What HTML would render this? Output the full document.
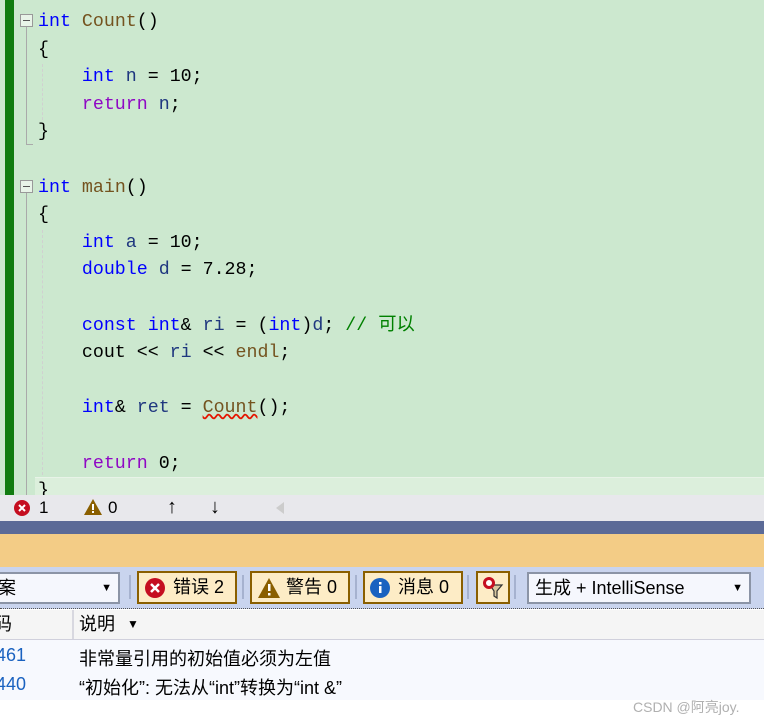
<!DOCTYPE html><html><head><meta charset="utf-8"><style>
body{margin:0;width:764px;height:724px;position:relative;overflow:hidden;background:#fff;font-family:"Liberation Sans","Noto Sans CJK SC",sans-serif}
.ed{position:absolute;left:0;top:0;width:764px;height:495px;background:#cce8cf}
.gb{position:absolute;left:5px;top:0;width:9px;height:495px;background:#107c10}
.code{position:absolute;left:38px;top:9px;font-family:"Liberation Mono",monospace;font-size:18.3px;line-height:27.6px;white-space:pre;color:#000}
.k{color:#0000ff}.f{color:#74531f}.v{color:#1f377f}.r{color:#8f08c4}.c{color:#008000}
.fold{position:absolute;left:20px;width:11px;height:11px;border:1px solid #999;background:#e8f4e8}
.fold:after{content:"";position:absolute;left:2px;top:5px;width:7px;height:1px;background:#555}
.vl{position:absolute;left:26px;width:1px;background:#aaa}
.dl{position:absolute;left:42px;width:0;border-left:1px dashed #d0d0d0}
.sb{position:absolute;top:495px;left:0;width:764px;height:26px;background:#e8e8ec;font-size:17px}
.bar1{position:absolute;top:521px;left:0;width:764px;height:13px;background:#5b6a97}
.bar2{position:absolute;top:534px;left:0;width:764px;height:33px;background:#f3cc86}
.tb{position:absolute;top:567px;left:0;width:764px;height:41px;background:#c9d4ee;border-bottom:1px dotted #555}
.btn{position:absolute;top:4px;height:29px;border:2px solid #8a5f00;background:#fdecc6;font-size:18px;line-height:29px;box-sizing:content-box}
.sel{position:absolute;top:5px;height:28px;border:2px solid #8b94a6;background:#f5f7fd;font-size:18px;line-height:28px}
.sep{position:absolute;top:8px;width:2px;height:24px;background:#a6b2cf}
.hd{position:absolute;top:610px;left:0;width:764px;height:29px;background:#f5f5f5;border-bottom:1px solid #d0d0dc;font-size:18px;line-height:29px}
.rows{position:absolute;top:640px;left:0;width:764px;height:60px;background:#f7f9fe;font-size:18px}
</style></head><body>
<div class="ed"></div><div class="gb"></div>
<div class="fold" style="top:14px"></div><div class="vl" style="top:27px;height:118px"></div><div style="position:absolute;left:26px;top:144px;width:7px;height:1px;background:#aaa"></div>
<div class="fold" style="top:180px"></div><div class="vl" style="top:193px;height:302px"></div>
<div class="dl" style="top:64px;height:56px"></div><div class="dl" style="top:230px;height:245px"></div>
<div style="position:absolute;left:35px;top:477px;width:729px;height:17px;background:#dcefdc;border-top:1px solid #e8f3e8"></div>
<div class="code"><span class="k">int</span> <span class="f">Count</span>()
{
    <span class="k">int</span> <span class="v">n</span> = 10;
    <span class="r">return</span> <span class="v">n</span>;
}

<span class="k">int</span> <span class="f">main</span>()
{
    <span class="k">int</span> <span class="v">a</span> = 10;
    <span class="k">double</span> <span class="v">d</span> = 7.28;

    <span class="k">const</span> <span class="k">int</span>&amp; <span class="v">ri</span> = (<span class="k">int</span>)<span class="v">d</span>; <span class="c">// 可以</span>
    cout &lt;&lt; <span class="v">ri</span> &lt;&lt; <span class="f">endl</span>;

    <span class="k">int</span>&amp; <span class="v">ret</span> = <span class="f" style="text-decoration:underline wavy #e51400">Count</span>();

    <span class="r">return</span> 0;
}</div>
<div class="sb">
<svg style="position:absolute;left:14px;top:5px" width="16" height="16"><circle cx="8" cy="8" r="8" fill="#c50e20"/><path d="M5 5L11 11M11 5L5 11" stroke="#fff" stroke-width="2"/></svg>
<span style="position:absolute;left:39px;top:3px">1</span>
<svg style="position:absolute;left:84px;top:4px" width="18" height="16"><path d="M9 0L18 16H0Z" fill="#8a5f00"/><rect x="8" y="5" width="2" height="6" fill="#fff"/><rect x="8" y="12" width="2" height="2" fill="#fff"/></svg>
<span style="position:absolute;left:108px;top:3px">0</span>
<span style="position:absolute;left:167px;top:1px;font-size:20px">↑</span><span style="position:absolute;left:210px;top:1px;font-size:20px">↓</span>
<svg style="position:absolute;left:276px;top:7px" width="8" height="12"><path d="M8 0V12L0 6Z" fill="#ccc"/></svg>
</div>
<div class="bar1"></div><div class="bar2"></div>
<div class="tb">
<div class="sel" style="left:-4px;width:120px"><span style="position:absolute;left:0">案</span><span style="position:absolute;right:6px;font-size:11px">▼</span></div>
<div class="sep" style="left:129px"></div>
<div class="btn" style="left:137px;width:96px"><svg style="position:absolute;left:6px;top:5px" width="20" height="20"><circle cx="10" cy="10" r="10" fill="#c50e20"/><path d="M6 6L14 14M14 6L6 14" stroke="#fff" stroke-width="2.5"/></svg><span style="position:absolute;left:34px">错误 2</span></div>
<div class="sep" style="left:242px"></div>
<div class="btn" style="left:250px;width:96px"><svg style="position:absolute;left:6px;top:5px" width="22" height="20"><path d="M11 0L22 20H0Z" fill="#8a5f00"/><rect x="10" y="6" width="2.5" height="7" fill="#fff"/><rect x="10" y="15" width="2.5" height="2.5" fill="#fff"/></svg><span style="position:absolute;left:34px">警告 0</span></div>
<div class="sep" style="left:355px"></div>
<div class="btn" style="left:363px;width:96px"><svg style="position:absolute;left:5px;top:5px" width="20" height="20"><circle cx="10" cy="10" r="10" fill="#1a62c0"/><rect x="9" y="8" width="2.5" height="7" fill="#fff"/><rect x="9" y="4" width="2.5" height="2.5" fill="#fff"/></svg><span style="position:absolute;left:33px">消息 0</span></div>
<div class="sep" style="left:467px"></div>
<div class="btn" style="left:476px;width:30px"><svg style="position:absolute;left:4px;top:3px" width="24" height="24"><path d="M8 9H20L15 15V22L12 20V15Z" fill="#d8c8a0" stroke="#333" stroke-width="1.2"/><circle cx="7" cy="7" r="4.5" fill="#fff" stroke="#c50e20" stroke-width="3"/></svg></div>
<div class="sep" style="left:514px"></div>
<div class="sel" style="left:527px;width:220px"><span style="position:absolute;left:6px">生成 + IntelliSense</span><span style="position:absolute;right:6px;font-size:11px">▼</span></div>
</div>
<div class="hd"><span style="position:absolute;left:-6px">码</span><div style="position:absolute;left:72px;top:0;width:2px;height:29px;background:#d8d8e0"></div><span style="position:absolute;left:79px">说明</span><span style="position:absolute;left:127px;font-size:12px">▼</span></div>
<div class="rows">
<span style="position:absolute;left:-4px;top:5px;color:#1a62c0">461</span><span style="position:absolute;left:79px;top:5px">非常量引用的初始值必须为左值</span>
<span style="position:absolute;left:-4px;top:34px;color:#1a62c0">440</span><span style="position:absolute;left:79px;top:34px">“初始化”: 无法从“int”转换为“int &amp;”</span>
</div>
<div style="position:absolute;left:633px;top:697px;font-size:14px;color:#b0b0b0">CSDN @阿亮joy.</div>
</body></html>
